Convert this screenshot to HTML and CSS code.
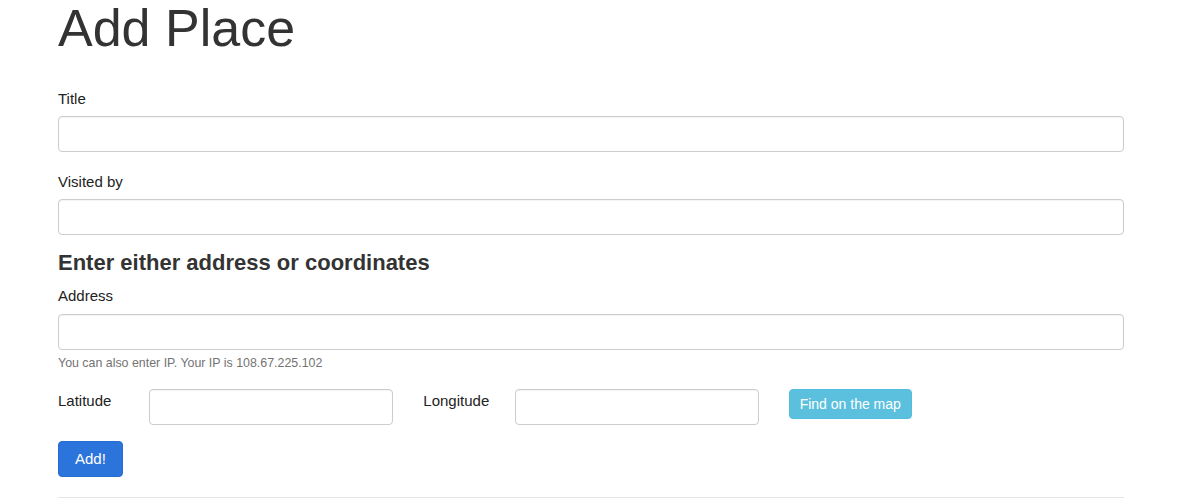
FILE: index.html
```html
<!DOCTYPE html>
<html lang="en">
<head>
  <meta charset="UTF-8">
  <meta name="viewport" content="width=device-width, initial-scale=1.0">
  <title>Add Place</title>
  <link rel="stylesheet" href="styles.css">
</head>
<body>
  <div class="container">
    <h1>Add Place</h1>
    <form>
      <div class="form-group">
        <label for="title">Title</label>
        <input type="text" id="title" class="form-control">
      </div>

      <div class="form-group">
        <label for="visited">Visited by</label>
        <input type="text" id="visited" class="form-control">
      </div>

      <h3>Enter either address or coordinates</h3>

      <div class="form-group address">
        <label for="address">Address</label>
        <input type="text" id="address" class="form-control">
        <p class="help">You can also enter IP. Your IP is 108.67.225.102</p>
      </div>

      <div class="coords">
        <label for="lat" class="col-1">Latitude</label>
        <input type="text" id="lat" class="form-control col-3">
        <label for="lng" class="col-1">Longitude</label>
        <input type="text" id="lng" class="form-control col-3">
        <div class="col-4">
          <button type="button" class="btn btn-info">Find on the map</button>
        </div>
      </div>

      <button type="submit" class="btn btn-primary">Add!</button>
    </form>
    <hr>
  </div>
</body>
</html>
```

FILE: styles.css
```css
* {
  box-sizing: border-box;
}
body {
  margin: 0;
  font-family: "Liberation Sans", Arial, sans-serif;
  font-size: 15px;
  color: #222;
  background: #fff;
}
.container {
  width: 1066px;
  margin-left: 58px;
}
h1 {
  margin: 0 0 32px;
  font-size: 52px;
  font-weight: normal;
  line-height: 57px;
  color: #333;
}
h3 {
  margin: -3px 0 12px;
  font-size: 22px;
  font-weight: bold;
  line-height: 22px;
  color: #333;
}
.form-group {
  margin-bottom: 20px;
}
label {
  display: block;
  line-height: 20px;
  margin-bottom: 7px;
  white-space: nowrap;
}
.address label {
  margin-bottom: 8px;
}
.form-control {
  display: block;
  width: 100%;
  height: 36px;
  padding: 6px 12px;
  font: inherit;
  border: 1px solid #ccc;
  border-radius: 4px;
  box-shadow: inset 0 1px 1px rgba(0,0,0,0.05);
}
.help {
  margin: 5px 0 0;
  font-size: 12.4px;
  line-height: 17px;
  color: #737373;
}
.coords {
  display: grid;
  grid-template-columns: repeat(12, minmax(0, 1fr));
  column-gap: 30px;
  align-items: start;
  margin-top: -3px;
  margin-bottom: 16px;
}
.coords label {
  margin: 2px 0 0;
}
.col-1 { grid-column: span 1; }
.col-3 { grid-column: span 3; }
.col-4 { grid-column: span 4; }
.btn {
  display: inline-block;
  font: inherit;
  border: 1px solid transparent;
  border-radius: 4px;
  color: #fff;
  cursor: pointer;
}
.btn-info {
  padding: 4px 10px;
  font-size: 14px;
  line-height: 20px;
  background: #5bc0de;
  border-color: #52bcdc;
}
.btn-primary {
  padding: 6px 16px;
  line-height: 22px;
  background: #2b74db;
  border-color: #276ccf;
}
hr {
  margin: 20px 0 0;
  border: 0;
  border-top: 1px solid #e6e6e6;
}
```
